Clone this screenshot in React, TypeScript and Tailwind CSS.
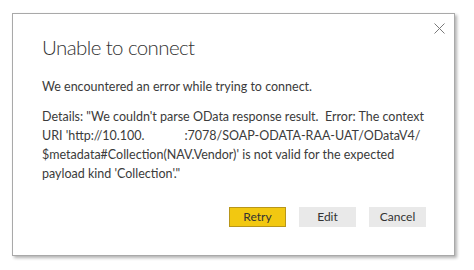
const App = () => {
    return (
        <div className="min-h-screen bg-white pt-[13px] pl-[12px]" style={{ fontFamily: 'Lato, "Noto Sans", sans-serif' }}>
            <div className="relative w-[443px] h-[243px] border border-[#a9a9a9] bg-white shadow-[2px_2px_3px_rgba(0,0,0,0.3)] pl-[29px] pr-[28px] pt-[18px] text-[#3b3b3b]">
                <button className="absolute right-[9px] top-[9px] w-[11px] h-[11px]" aria-label="Close">
                    <svg viewBox="0 0 11 11" className="w-[11px] h-[11px]" fill="none" stroke="#7a7a7a" strokeWidth="1">
                        <path d="M0.5 0.5 L10.5 10.5 M10.5 0.5 L0.5 10.5" />
                    </svg>
                </button>

                <h1 className="text-[20.5px] font-light leading-[30px] tracking-[-0.6px] text-[#333333] whitespace-nowrap">Unable to connect</h1>

                <p className="mt-[15px] text-[12.5px] leading-[19px] whitespace-nowrap">We encountered an error while trying to connect.</p>

                <p className="mt-[11px] text-[12.5px] leading-[19px] whitespace-nowrap">
                    Details: "We couldn't parse OData response result.&nbsp; Error: The context
                    <br />
                    URI 'http://10.100.<span className="inline-block w-[40px]" />:7078/SOAP-ODATA-RAA-UAT/ODataV4/
                    <br />
                    $metadata#Collection(NAV.Vendor)' is not valid for the expected
                    <br />
                    payload kind 'Collection'."
                </p>

                <div className="mt-[24px] flex justify-end gap-[13px] text-[12px]">
                    <button className="w-[57px] h-[20px] bg-[#f2c811] border border-[#b8961a] text-[#333333]">Retry</button>
                    <button className="w-[57px] h-[20px] bg-[#e9e9e9] text-[#333333]">Edit</button>
                    <button className="w-[57px] h-[20px] bg-[#e9e9e9] text-[#333333]">Cancel</button>
                </div>
            </div>
        </div>
    );
};

export default App;
